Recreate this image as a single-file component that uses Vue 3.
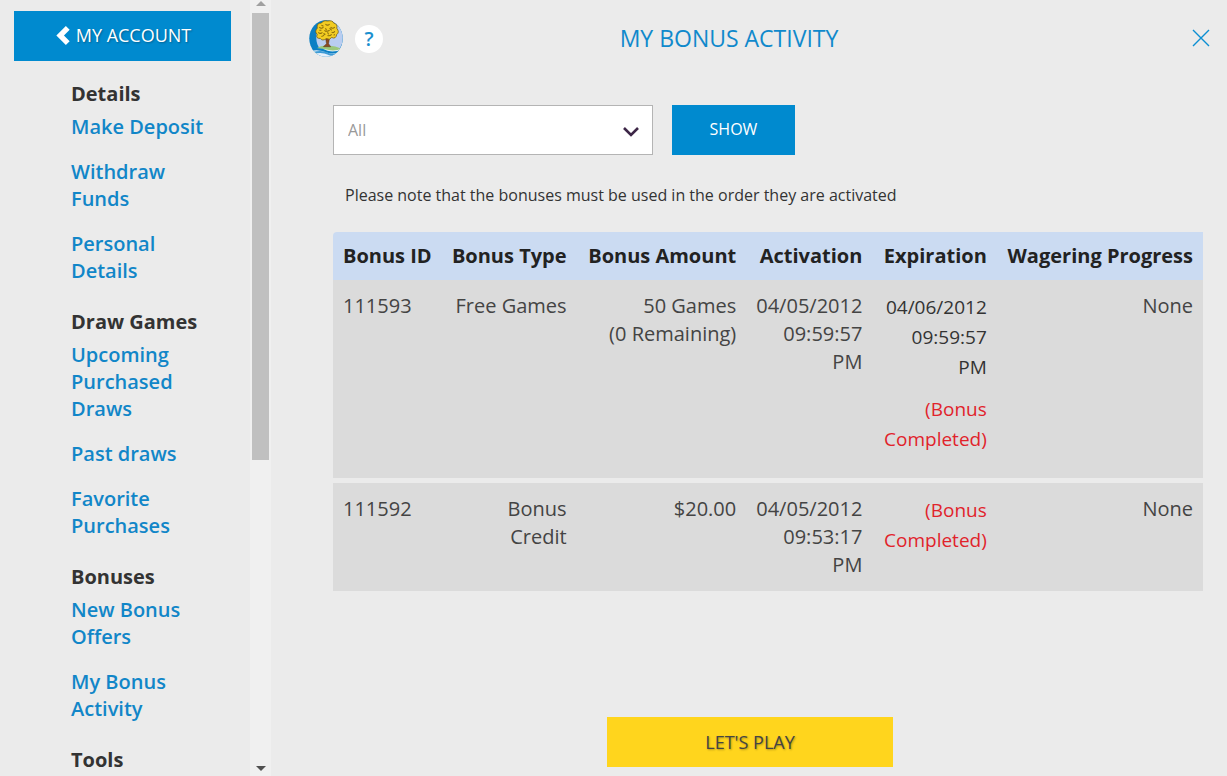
<template>
  <div class="account-page">
    <aside class="sidebar">
      <div class="sidebar-content">
        <button type="button" class="account-btn">
          <svg class="back-icon" viewBox="0 0 14 20" aria-hidden="true">
            <path d="M10 0 L14 4 L8 10 L14 16 L10 20 L0 10 Z" fill="#fff" />
          </svg>
          <span>MY ACCOUNT</span>
        </button>

        <nav class="menu">
          <section v-for="group in menu" :key="group.title" class="menu-group">
            <h2 class="menu-title">{{ group.title }}</h2>
            <ul class="menu-list">
              <li v-for="link in group.links" :key="link">
                <a href="#" @click.prevent>{{ link }}</a>
              </li>
            </ul>
          </section>
        </nav>
      </div>

      <!-- scroll track -->
      <div class="scroll-track" aria-hidden="true">
        <span class="arrow arrow-up"></span>
        <span class="thumb"></span>
        <span class="arrow arrow-down"></span>
      </div>
    </aside>

    <main class="main">
      <header class="header">
        <div class="brand">
          <svg class="logo" viewBox="0 0 33 36" aria-hidden="true">
            <defs>
              <clipPath id="logo-oval">
                <ellipse cx="16.5" cy="18" rx="16.3" ry="17.8" />
              </clipPath>
            </defs>
            <g clip-path="url(#logo-oval)">
              <rect width="33" height="36" fill="#0b7fc4" />
              <ellipse cx="20" cy="17" rx="13" ry="16" fill="#b9cdf0" />
              <path d="M5 29 Q12 24 19 25 Q26 25 31 28 L30 33 L5 33 Z" fill="#9cc87c" />
              <path d="M0 29 Q10 27 18 29 Q26 31 33 27 L33 36 L0 36 Z" fill="#e6f0fb" />
              <path d="M1 29 Q11 27 18 31 Q25 33 33 29" fill="none" stroke="#0b7fc4" stroke-width="2" />
              <path d="M4 32 Q13 30 19 33 Q25 35 31 32" fill="none" stroke="#3d9bd6" stroke-width="2" />
            </g>
            <path d="M16 17 L17 23 L14 26 L21 26 L19 23 L20 17 Z" fill="#8a4a22" stroke="#5a3218" stroke-width="0.5" />
            <path
              d="M8 8 Q7 3 12 3 Q14 0 18 1 Q23 0 24 3 Q28 4 27 8 Q30 12 27 14 Q26 19 22 17 Q20 20 17 18 Q13 21 11 18 Q6 18 8 14 Q5 11 8 8 Z"
              fill="#f2cc22"
              stroke="#6d5710"
              stroke-width="0.7"
            />
            <path
              d="M10 7 q2 2 4 0 M16 4 q2 2 4 0 M21 7 q2 2 4 0 M9 12 q2 2 4 0 M15 10 q2 2 5 0 M22 12 q2 1 3 -1 M12 16 q2 0 3 -2 M18 15 q2 1 4 -1 M12 5 l2 1 M16 8 l1 2 M14 13 l2 1 M20 8 l2 2 M24 15 l1 -1 M10 10 l2 0 M18 12 l1 2"
              fill="none"
              stroke="#8a6c0c"
              stroke-width="1"
            />
          </svg>
          <button type="button" class="help-btn" aria-label="Help">?</button>
        </div>
        <h1 class="title">MY BONUS ACTIVITY</h1>
        <button type="button" class="close-btn" aria-label="Close">
          <svg viewBox="0 0 20 20" aria-hidden="true">
            <path d="M2 1 L18 17 M18 1 L2 17" stroke="#0b8fd3" stroke-width="1.4" fill="none" />
          </svg>
        </button>
      </header>

      <div class="content">
        <form class="filter" @submit.prevent>
          <div class="select-wrap">
            <select v-model="filter" class="select" aria-label="Bonus status">
              <option value="all">All</option>
            </select>
            <svg class="chevron" viewBox="0 0 18 11" aria-hidden="true">
              <path d="M2 2 L9 9 L16 2" fill="none" stroke="#3d2647" stroke-width="2.6" />
            </svg>
          </div>
          <button type="submit" class="show-btn">SHOW</button>
        </form>

        <p class="note">Please note that the bonuses must be used in the order they are activated</p>

        <table class="bonus-table">
          <colgroup>
            <col class="col-id" />
            <col class="col-type" />
            <col class="col-amount" />
            <col class="col-activation" />
            <col class="col-expiration" />
            <col class="col-progress" />
          </colgroup>
          <thead>
            <tr>
              <th v-for="column in columns" :key="column" scope="col">{{ column }}</th>
            </tr>
          </thead>
          <tbody>
            <tr v-for="bonus in bonuses" :key="bonus.id">
              <td>{{ bonus.id }}</td>
              <td>{{ bonus.type }}</td>
              <td>
                <div v-for="line in bonus.amount" :key="line">{{ line }}</div>
              </td>
              <td>{{ bonus.activation }}</td>
              <td class="expiration">
                <p v-if="bonus.expiration" class="expiration-date">{{ bonus.expiration }}</p>
                <p class="status">{{ bonus.status }}</p>
              </td>
              <td>{{ bonus.progress }}</td>
            </tr>
          </tbody>
        </table>
      </div>

      <footer class="footer">
        <button type="button" class="play-btn">LET'S PLAY</button>
      </footer>
    </main>
  </div>
</template>

<script setup>
import { ref } from 'vue'

const filter = ref('all')

const menu = [
  { title: 'Details', links: ['Make Deposit', 'Withdraw Funds', 'Personal Details'] },
  { title: 'Draw Games', links: ['Upcoming Purchased Draws', 'Past draws', 'Favorite Purchases'] },
  { title: 'Bonuses', links: ['New Bonus Offers', 'My Bonus Activity'] },
  { title: 'Tools', links: [] }
]

const columns = ['Bonus ID', 'Bonus Type', 'Bonus Amount', 'Activation', 'Expiration', 'Wagering Progress']

const bonuses = [
  {
    id: '111593',
    type: 'Free Games',
    amount: ['50 Games', '(0 Remaining)'],
    activation: '04/05/2012 09:59:57 PM',
    expiration: '04/06/2012 09:59:57 PM',
    status: '(Bonus Completed)',
    progress: 'None'
  },
  {
    id: '111592',
    type: 'Bonus Credit',
    amount: ['$20.00'],
    activation: '04/05/2012 09:53:17 PM',
    expiration: '',
    status: '(Bonus Completed)',
    progress: 'None'
  }
]
</script>

<style>
body {
  margin: 0;
  background: #ebebeb;
}
</style>

<style scoped>
.account-page {
  display: flex;
  height: 100vh;
  overflow: hidden;
  background: #ebebeb;
  color: #444;
  font-family: "Open Sans", "Noto Sans", sans-serif;
}

.account-page * {
  box-sizing: border-box;
}

button {
  border: none;
  padding: 0;
  font-family: inherit;
  cursor: pointer;
}

/* sidebar */
.sidebar {
  display: flex;
  flex: 0 0 271px;
  overflow: hidden;
}

.sidebar-content {
  flex: 1;
  padding: 11px 19px 0 14px;
}

.account-btn {
  display: flex;
  align-items: center;
  justify-content: center;
  gap: 6px;
  width: 100%;
  height: 50px;
  padding: 0 0 2px 2px;
  background: #008acf;
  color: #fff;
  font-size: 18px;
  text-shadow: 1px 1px 2px rgba(0, 0, 0, 0.3);
}

.back-icon {
  width: 14px;
  height: 19px;
}

.menu {
  display: flex;
  flex-direction: column;
  gap: 24px;
  padding: 19px 16px 0 57px;
}

.menu-title {
  margin: 0 0 6px;
  color: #333;
  font-size: 20px;
  font-weight: 700;
  line-height: 27px;
}

.menu-list {
  display: flex;
  flex-direction: column;
  gap: 18px;
  margin: 0;
  padding: 0;
  list-style: none;
  font-size: 20px;
  font-weight: 600;
  line-height: 27px;
}

.menu-list a {
  color: #1186c8;
  text-decoration: none;
}

.scroll-track {
  display: flex;
  flex-direction: column;
  align-items: center;
  flex: 0 0 21px;
  padding: 1px 0 5px;
  background: #f0f0f0;
}

.arrow {
  border-left: 5px solid transparent;
  border-right: 5px solid transparent;
}

.arrow-up {
  border-bottom: 5px solid #a0a0a0;
}

.arrow-down {
  margin-top: auto;
  border-top: 5px solid #505050;
}

.thumb {
  width: 17px;
  height: 58%;
  margin-top: 7px;
  background: #c0c0c0;
}

/* main area */
.main {
  display: flex;
  flex: 1;
  flex-direction: column;
  min-width: 0;
}

.header {
  display: grid;
  grid-template-columns: 74px 1fr 136px;
  align-items: center;
  padding: 20px 16px 0 38px;
}

.brand {
  display: flex;
  align-items: center;
  gap: 12px;
}

.logo {
  width: 34px;
  height: 37px;
}

.help-btn {
  width: 28px;
  height: 28px;
  border-radius: 50%;
  background: #fff;
  color: #1c90cf;
  font-size: 20px;
  font-weight: 600;
  line-height: 28px;
}

.title {
  margin: 0;
  color: #1089cc;
  font-size: 23px;
  font-weight: 400;
  line-height: 37px;
  text-align: center;
}

.close-btn {
  justify-self: end;
  width: 20px;
  height: 20px;
  background: none;
}

.close-btn svg {
  display: block;
  width: 20px;
  height: 20px;
}

.content {
  padding: 48px 24px 0 62px;
}

.filter {
  display: flex;
  gap: 19px;
}

.select-wrap {
  position: relative;
  width: 320px;
}

.select {
  width: 100%;
  height: 50px;
  padding: 0 14px;
  border: 1px solid #b4b4b4;
  border-radius: 0;
  background: #fff;
  color: #999;
  font-family: inherit;
  font-size: 16px;
  appearance: none;
}

.chevron {
  position: absolute;
  top: 21px;
  right: 13px;
  width: 18px;
  height: 11px;
  pointer-events: none;
}

.show-btn {
  width: 123px;
  height: 50px;
  padding-bottom: 2px;
  background: #008acf;
  color: #fff;
  font-size: 16px;
}

.note {
  margin: 28px 0 25px 12px;
  color: #333;
  font-size: 16px;
  line-height: 24px;
}

/* bonus table */
.bonus-table {
  width: 100%;
  border-collapse: separate;
  border-spacing: 0;
  table-layout: fixed;
  font-size: 20px;
  line-height: 28px;
  text-align: right;
}

.col-id {
  width: 12.5%;
}

.col-type {
  width: 15.5%;
}

.col-amount {
  width: 19.5%;
}

.col-activation {
  width: 14.5%;
}

.col-expiration {
  width: 14.3%;
}

.col-progress {
  width: 23.7%;
}

th {
  padding: 10px;
  background: #cbdbf2;
  color: #222;
  font-weight: 700;
  white-space: nowrap;
}

th:first-child {
  border-top-left-radius: 4px;
}

td {
  padding: 12px 10px;
  border-bottom: 5px solid #ebebeb;
  background: #dbdbdb;
  vertical-align: top;
}

th:first-child,
td:first-child {
  text-align: left;
}

.expiration {
  font-size: 19px;
  line-height: 30px;
}

.expiration p {
  margin: 0;
}

.expiration .expiration-date {
  margin-bottom: 12px;
  color: #333;
}

.expiration-date + .status {
  padding-bottom: 12px;
}

.status {
  color: #e1232b;
}

.footer {
  display: flex;
  justify-content: center;
  margin-top: auto;
  padding: 0 0 9px 2px;
}

.play-btn {
  width: 30%;
  height: 50px;
  background: #ffd51d;
  color: #444;
  font-size: 18px;
  text-shadow: 1px 1px 2px rgba(0, 0, 0, 0.3);
}
</style>
